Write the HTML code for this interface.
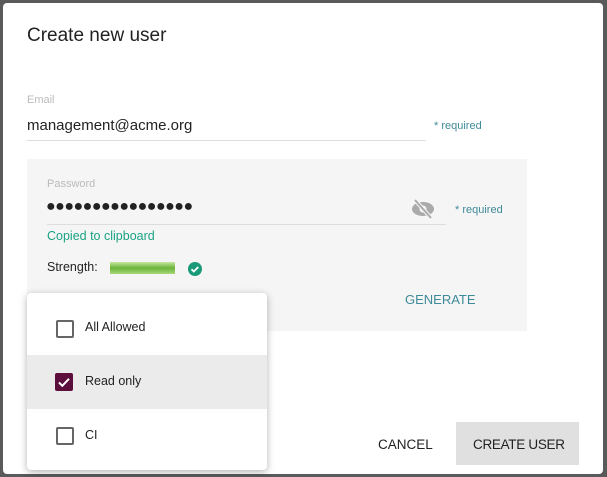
<!DOCTYPE html>
<html><head><style>
body{margin:0;width:607px;height:477px;background:#5a5a5a;font-family:"Liberation Sans",sans-serif;position:relative;overflow:hidden}
.d{position:absolute;left:3px;top:3px;width:600px;height:471px;background:#fff;border-radius:4px}
.a{position:absolute;white-space:nowrap}
</style></head><body>
<div class="d"></div>
<div class="a" style="left:27px;top:25px;font-size:19px;color:#222">Create new user</div>
<div class="a" style="left:27px;top:94px;font-size:11px;color:#bbb">Email</div>
<div class="a" style="left:27px;top:117px;font-size:15px;color:#222">management@acme.org</div>
<div class="a" style="left:27px;top:140px;width:399px;height:1px;background:#ddd"></div>
<div class="a" style="left:434px;top:120px;font-size:11px;color:#3f8a9a">* required</div>
<div class="a" style="left:27px;top:159px;width:500px;height:172px;background:#f5f5f5"></div>
<div class="a" style="left:47px;top:178px;font-size:11px;color:#bbb">Password</div>
<div class="a" style="left:46px;top:198px;font-size:16px;color:#222;letter-spacing:-0.5px">●●●●●●●●●●●●●●●●</div>
<div class="a" style="left:47px;top:224px;width:399px;height:1px;background:#ddd"></div>
<svg class="a" style="left:410px;top:198px" width="26" height="22" viewBox="0 0 26 22"><ellipse cx="13" cy="11" rx="11" ry="7" fill="#aaa"/><circle cx="13" cy="11" r="3.5" fill="#f5f5f5"/><line x1="5" y1="2" x2="21" y2="20" stroke="#f5f5f5" stroke-width="4"/><line x1="5" y1="2" x2="21" y2="20" stroke="#aaa" stroke-width="2"/></svg>
<div class="a" style="left:455px;top:204px;font-size:11px;color:#3f8a9a">* required</div>
<div class="a" style="left:47px;top:229px;font-size:12.5px;color:#1aa383">Copied to clipboard</div>
<div class="a" style="left:47px;top:260px;font-size:12.5px;color:#222">Strength:</div>
<div class="a" style="left:110px;top:262px;width:65px;height:12px;background:linear-gradient(#c5e8a0,#6cb33a 50%,#a8d878)"></div>
<svg class="a" style="left:187px;top:261px" width="16" height="16"><circle cx="8" cy="8" r="7" fill="#1a9a78"/><path d="M4.5 8.2l2.3 2.3 4.5-4.5" stroke="#fff" stroke-width="1.8" fill="none"/></svg>
<div class="a" style="left:405px;top:292px;font-size:13px;color:#3f8a9a">GENERATE</div>
<div class="a" style="left:27px;top:293px;width:240px;height:177px;background:#fff;border-radius:4px;box-shadow:0 2px 8px rgba(0,0,0,.3)"></div>
<div class="a" style="left:27px;top:355px;width:240px;height:54px;background:#ebebeb"></div>
<div class="a" style="left:56px;top:320px;width:14px;height:14px;border:2px solid #666;border-radius:2px"></div>
<div class="a" style="left:85px;top:320px;font-size:12.5px;color:#222">All Allowed</div>
<div class="a" style="left:55px;top:373px;width:18px;height:18px;background:#5c0e3c;border-radius:2px"></div>
<svg class="a" style="left:55px;top:373px" width="18" height="18"><path d="M4 9.5l3.3 3.3 6.7-7" stroke="#fff" stroke-width="2" fill="none"/></svg>
<div class="a" style="left:85px;top:374px;font-size:12.5px;color:#222">Read only</div>
<div class="a" style="left:56px;top:427px;width:14px;height:14px;border:2px solid #666;border-radius:2px"></div>
<div class="a" style="left:85px;top:428px;font-size:12.5px;color:#222">CI</div>
<div class="a" style="left:378px;top:437px;font-size:13.5px;color:#222">CANCEL</div>
<div class="a" style="left:456px;top:422px;width:123px;height:43px;background:#e0e0e0"></div>
<div class="a" style="left:473px;top:437px;font-size:13.5px;color:#222;letter-spacing:-0.3px">CREATE USER</div>
</body></html>
